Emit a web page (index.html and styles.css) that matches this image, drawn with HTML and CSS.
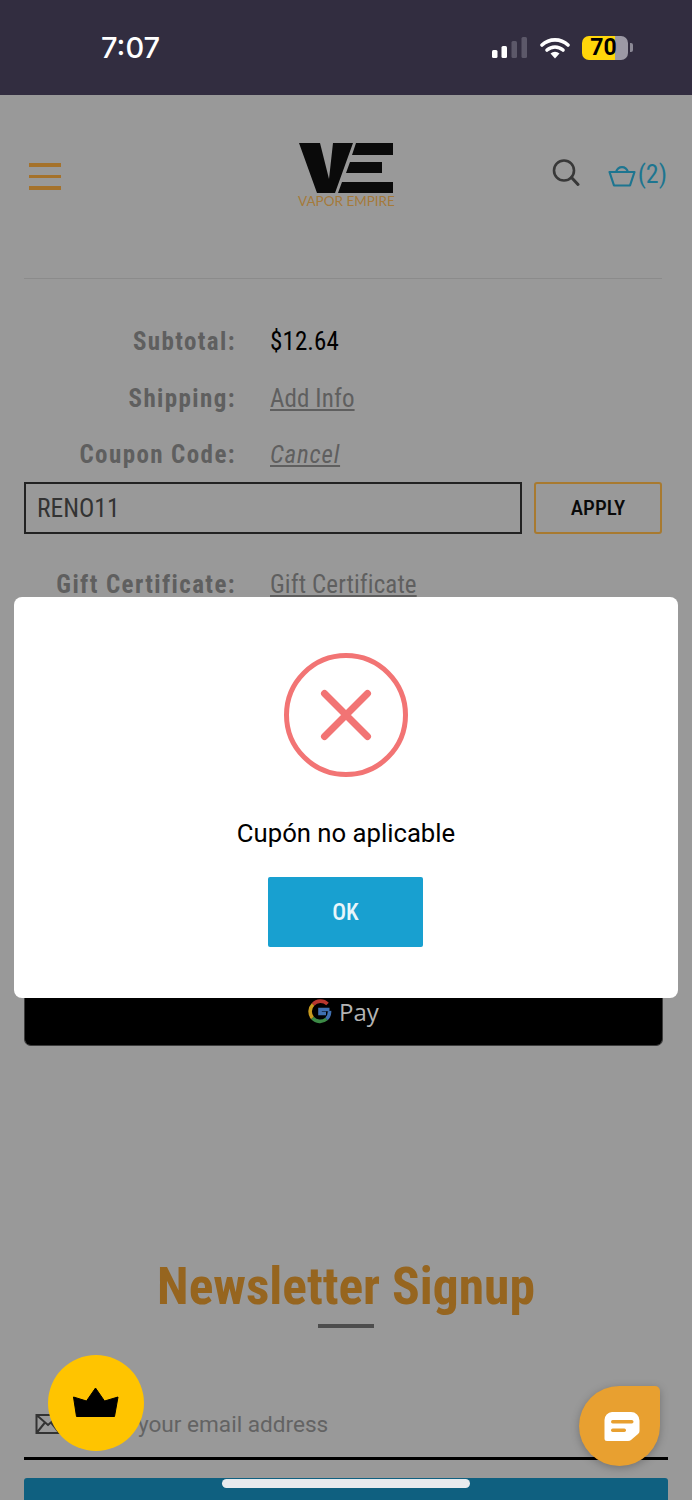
FILE: index.html
```html
<!DOCTYPE html>
<html lang="en">
  <head>
    <meta charset="UTF-8" />
    <meta name="viewport" content="width=device-width, initial-scale=1.0" />
    <title>Cart</title>
    <link rel="stylesheet" href="styles.css">
  </head>
  <body>
    <div class="status-bar">
      <span class="time">7:07</span>
      <div class="status-icons">
        <svg class="signal" width="36" height="22" viewBox="0 0 36 22">
          <rect x="0" y="13" width="5.5" height="8" rx="1.5" fill="#fff" />
          <rect x="9.5" y="9" width="5.5" height="12" rx="1.5" fill="#fff" />
          <rect x="19.5" y="4" width="5.5" height="17" rx="1.5" fill="#5c5869" />
          <rect x="29.5" y="0" width="5.5" height="21" rx="1.5" fill="#5c5869" />
        </svg>
        <svg class="wifi" width="30" height="22" viewBox="0 0 30 22">
          <path d="M2 8 A19 19 0 0 1 28 8" fill="none" stroke="#fff" stroke-width="3.6" stroke-linecap="round" />
          <path d="M7 13 A12 12 0 0 1 23 13" fill="none" stroke="#fff" stroke-width="3.6" stroke-linecap="round" />
          <path d="M10.5 16.5 A7 7 0 0 1 19.5 16.5 L15 21.5 Z" fill="#fff" />
        </svg>
        <div class="battery"><span class="battery-level">70</span></div>
        <span class="battery-nub"></span>
      </div>
    </div>

    <div class="page">
      <header class="site-header">
        <div class="menu-icon"><span></span><span></span><span></span></div>
        <div class="logo">
          <svg width="96" height="51" viewBox="0 0 96 51">
            <path d="M1 0H22L31 36L35 0H55L37 50H19Z" fill="#0a0a0a" />
            <path d="M58 0H95V12H54Z M52 19H84V30H48Z M44 39H95V50H40Z" fill="#0a0a0a" />
          </svg>
          <span class="logo-text">VAPOR EMPIRE</span>
        </div>
        <div class="header-actions">
          <svg class="search-icon" width="28" height="28" viewBox="0 0 28 28">
            <circle cx="12" cy="11.5" r="10" fill="none" stroke="#383838" stroke-width="2.6" />
            <path d="M19.5 18.5 L26 25.5" stroke="#383838" stroke-width="3" stroke-linecap="round" />
          </svg>
          <a class="cart-link">
            <svg width="28" height="25" viewBox="0 0 28 25">
              <path d="M1.5 10 H26.5 L22 23.5 H6 Z" fill="none" stroke="#1d7590" stroke-width="2.2" stroke-linejoin="round" />
              <path d="M8 10 A6.5 8 0 0 1 20 10" fill="none" stroke="#1d7590" stroke-width="2.2" />
            </svg>
            <span>(2)</span>
          </a>
        </div>
      </header>

      <div class="totals">
        <div class="total-row">
          <span class="total-label">Subtotal:</span>
          <span class="total-value">$12.64</span>
        </div>
        <div class="total-row">
          <span class="total-label">Shipping:</span>
          <a class="total-link">Add Info</a>
        </div>
        <div class="total-row">
          <span class="total-label">Coupon Code:</span>
          <a class="total-link cancel">Cancel</a>
        </div>
        <div class="coupon-form">
          <div class="coupon-input">RENO11</div>
          <div class="coupon-apply">APPLY</div>
        </div>
        <div class="total-row gift">
          <span class="total-label">Gift Certificate:</span>
          <a class="total-link">Gift Certificate</a>
        </div>
      </div>

      <div class="gpay-button">
        <svg width="24" height="25" viewBox="0 0 24 25">
          <path d="M21.5 10.5 H12 V14.5 H18" fill="none" stroke="#3f6fb0" stroke-width="3.6" />
          <path d="M19.5 5 A10 10 0 0 0 5 5.5" fill="none" stroke="#b8372e" stroke-width="3.6" />
          <path d="M5 5.5 A10 10 0 0 0 4.5 19" fill="none" stroke="#c89a1e" stroke-width="3.6" />
          <path d="M4.5 19 A10 10 0 0 0 18.5 20" fill="none" stroke="#3c8a46" stroke-width="3.6" />
          <path d="M18.5 20 A10 10 0 0 0 21.5 12" fill="none" stroke="#3f6fb0" stroke-width="3.6" />
        </svg>
        <span>Pay</span>
      </div>

      <section class="newsletter">
        <h2>Newsletter Signup</h2>
        <div class="newsletter-rule"></div>
        <div class="email-field">
          <svg width="26" height="22" viewBox="0 0 26 22">
            <path d="M1.5 2 H24.5 V20 H1.5 Z M1.5 2 L13 12 L24.5 2 M1.5 20 L10 9.5 M24.5 20 L16 9.5" fill="none" stroke="#333" stroke-width="2" />
          </svg>
          <span class="email-placeholder">Enter your email address</span>
        </div>
        <div class="subscribe-button"></div>
      </section>
    </div>

    <div class="modal">
      <svg class="modal-icon" width="124" height="124" viewBox="0 0 124 124">
        <circle cx="62" cy="62" r="59.5" fill="none" stroke="#f27474" stroke-width="5" />
        <path d="M40.5 40.5 L83.5 83.5 M83.5 40.5 L40.5 83.5" stroke="#f27474" stroke-width="7" stroke-linecap="round" />
      </svg>
      <p class="modal-text">Cupón no aplicable</p>
      <div class="modal-button">OK</div>
    </div>

    <div class="crown-badge">
      <svg width="46" height="30" viewBox="0 0 46 30">
        <path d="M0.5 9 L13.5 13 L22.5 0 L31.5 13 L45 9 L41.5 28.5 H3.5 Z" fill="#000" stroke="#000" stroke-linejoin="round" />
      </svg>
    </div>

    <div class="chat-bubble">
      <svg width="36" height="29" viewBox="0 0 36 29">
        <path d="M8 0 H27 A8.5 8.5 0 0 1 35.5 8.5 V19 Q35.5 21 34 22 L27 28 Q26 29 24 29 H3 Q0.5 29 0.5 26.5 V8 A8 8 0 0 1 8 0 Z" fill="#fff" />
        <rect x="7" y="8" width="22.5" height="3.4" rx="1.7" fill="#e8a030" />
        <rect x="7" y="16.5" width="15" height="3.4" rx="1.7" fill="#e8a030" />
      </svg>
    </div>

    <div class="home-indicator"></div>
  </body>
</html>
```

FILE: styles.css
```css
html,
body {
  margin: 0;
  padding: 0;
}
body {
  position: relative;
  width: 692px;
  height: 1500px;
  overflow: hidden;
  font-family: Roboto, "Liberation Sans", sans-serif;
  background-color: #999;
}

/* status bar */
.status-bar {
  display: flex;
  align-items: center;
  justify-content: space-between;
  height: 95px;
  padding: 0 59px 0 101px;
  box-sizing: border-box;
  background: #322d40;
}
.time {
  color: #fff;
  font-family: Inter, Roboto, sans-serif;
  font-size: 29px;
  font-weight: 500;
}
.status-icons {
  display: flex;
  align-items: center;
  gap: 12px;
}
.battery {
  width: 46px;
  height: 24px;
  border-radius: 7px;
  background: linear-gradient(to right, #ffd60a 71%, #9c99a5 71%);
  text-align: center;
}
.battery-level {
  display: block;
  width: 43px;
  color: #000;
  font-size: 23px;
  font-weight: 700;
  line-height: 24px;
}
.battery-nub {
  width: 3px;
  height: 9px;
  margin-left: -10px;
  border-radius: 0 2px 2px 0;
  background: #8c8996;
}

/* header */
.site-header {
  position: relative;
  display: flex;
  justify-content: space-between;
  height: 184px;
  margin: 0 30px 0 24px;
  border-bottom: 1px solid #8b8b8b;
  box-sizing: border-box;
}
.menu-icon {
  display: flex;
  flex-direction: column;
  gap: 8px;
  margin: 68px 0 0 5px;
}
.menu-icon span {
  display: block;
  width: 32px;
  height: 3.5px;
  background: #a5722b;
}
.logo {
  position: absolute;
  top: 48px;
  left: 274px;
  display: flex;
  flex-direction: column;
}
.logo-text {
  color: #a57a3a;
  font-family: Lato, sans-serif;
  font-size: 13.5px;
  line-height: 14px;
  white-space: nowrap;
}
.header-actions {
  display: flex;
  align-items: flex-start;
  gap: 28px;
  margin: 64px -5px 0 0;
}
.cart-link {
  display: flex;
  align-items: center;
  gap: 2px;
  color: #1d7590;
  font-size: 26px;
  font-stretch: 75%;
}

/* totals */
.totals {
  padding: 48px 24px 0;
}
.total-row {
  display: grid;
  grid-template-columns: 212px 1fr;
  column-gap: 34px;
  align-items: center;
  height: 28px;
  margin-bottom: 28.5px;
  font-size: 25px;
  font-stretch: 75%;
  letter-spacing: 0.1px;
}
.total-label {
  color: #5f5f5f;
  font-weight: 700;
  letter-spacing: 1.4px;
  text-align: right;
  white-space: nowrap;
}
.total-value {
  color: #000;
}
.total-link {
  color: #5f5f5f;
  text-decoration: underline;
}
.cancel {
  font-style: italic;
  letter-spacing: 0.8px;
}
.coupon-form {
  display: flex;
  gap: 12px;
  height: 52px;
  margin-top: -15px;
}
.coupon-input {
  display: flex;
  align-items: center;
  width: 498px;
  padding-left: 11px;
  border: 2px solid #222;
  box-sizing: border-box;
  color: #333;
  font-size: 25.5px;
  font-stretch: 75%;
}
.coupon-apply {
  display: flex;
  align-items: center;
  justify-content: center;
  width: 128px;
  border: 2px solid #a87a30;
  border-radius: 3px;
  box-sizing: border-box;
  color: #0a0a0a;
  font-size: 21px;
  font-weight: 500;
  font-stretch: 75%;
}
.gift {
  margin-top: 36px;
}

/* google pay */
.gpay-button {
  display: flex;
  align-items: center;
  justify-content: center;
  gap: 7px;
  height: 174px;
  margin: 274px 29px 0 24px;
  padding-top: 107px;
  border: 1px solid #3c3c3c;
  border-top: none;
  border-radius: 0 0 7px 7px;
  box-sizing: border-box;
  background: #000;
}
.gpay-button span {
  color: #b4b4b4;
  font-family: "Open Sans", sans-serif;
  font-size: 24px;
}

/* newsletter */
.newsletter {
  padding: 0 24px;
}
.newsletter h2 {
  margin: 214px 0 0;
  color: #96651f;
  font-size: 51.5px;
  font-weight: 700;
  font-stretch: 75%;
  line-height: 54px;
  text-align: center;
}
.newsletter-rule {
  width: 56px;
  height: 4px;
  margin: 10px auto 0;
  background: #4d4d4d;
}
.email-field {
  display: flex;
  align-items: center;
  gap: 19px;
  height: 70px;
  margin-top: 62px;
  padding: 2px 0 0 11px;
  border-bottom: 3px solid #000;
  box-sizing: border-box;
}
.email-placeholder {
  color: #636363;
  font-size: 22.6px;
}
.subscribe-button {
  height: 40px;
  margin-top: 18px;
  border-radius: 3px 3px 0 0;
  background: #0f6080;
}

/* alert dialog */
.modal {
  position: absolute;
  top: 597px;
  left: 14px;
  display: flex;
  flex-direction: column;
  align-items: center;
  width: 664px;
  height: 401px;
  padding-top: 56px;
  border-radius: 8px;
  box-sizing: border-box;
  background: white;
}
.modal-text {
  margin: 39px 0 0;
  color: #000;
  font-size: 25.7px;
  line-height: 34px;
}
.modal-button {
  display: flex;
  align-items: center;
  justify-content: center;
  width: 155px;
  height: 70px;
  margin: 27px 1px 0 0;
  border-radius: 2px;
  box-sizing: border-box;
  background: #18a0d0;
  color: #e8f6fb;
  font-size: 23px;
  font-weight: 500;
  font-stretch: 75%;
}

/* floating widgets */
.crown-badge {
  position: absolute;
  top: 1355px;
  left: 48px;
  display: flex;
  align-items: center;
  justify-content: center;
  width: 96px;
  height: 96px;
  border-radius: 50%;
  background: #ffc400;
}
.chat-bubble {
  position: absolute;
  top: 1386px;
  left: 579px;
  display: flex;
  align-items: center;
  justify-content: center;
  width: 81px;
  height: 80px;
  padding-left: 5px;
  border-radius: 50% 5px 50% 50%;
  box-sizing: border-box;
  background: #e8a030;
  box-shadow: 0 2px 8px rgba(0, 0, 0, 0.25);
}
.home-indicator {
  position: absolute;
  top: 1479px;
  left: 222px;
  width: 248px;
  height: 9px;
  border-radius: 5px;
  background: #e8ebee;
}
```
